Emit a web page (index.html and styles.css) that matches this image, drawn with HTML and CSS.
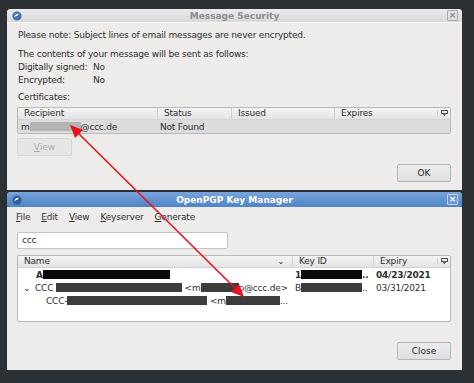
FILE: index.html
```html
<!DOCTYPE html>
<html lang="en">
<head>
<meta charset="utf-8">
<title>Message Security / OpenPGP Key Manager</title>
<link rel="stylesheet" href="styles.css">
</head>
<body>
<div class="desk">

<!-- Message Security dialog (inactive) -->
<div class="win win-sec">
  <div class="titlebar inactive">
    <svg class="appicon" viewBox="0 0 10 10" width="10" height="10">
      <circle cx="5" cy="5" r="4.6" fill="#3f6fb4"/>
      <path d="M2.2 6.3 C2.6 3.6 4.6 2.3 7.4 2.8 C6 3.3 5.4 4.1 5.6 5 C4.4 4.6 3.2 5.2 2.2 6.3 Z" fill="#fff"/>
    </svg>
    <span class="title">Message Security</span>
    <span class="closebtn">×</span>
  </div>
  <div class="content">
    <p class="line first">Please note: Subject lines of email messages are never encrypted.</p>
    <p class="line second">The contents of your message will be sent as follows:</p>
    <div class="status">
      <span>Digitally signed:</span><span>No</span>
      <span>Encrypted:</span><span>No</span>
    </div>
    <p class="line certs">Certificates:</p>
    <div class="table">
      <div class="thead cert-cols">
        <span>Recipient</span><span>Status</span><span>Issued</span><span>Expires</span>
        <span class="picker"><svg viewBox="0 0 7 7" width="7" height="7"><rect x="0.5" y="0.5" width="6" height="3" fill="none" stroke="#555"/><path d="M2 4 L5 4 L3.5 6.5 Z" fill="#555"/></svg></span>
      </div>
      <div class="trow cert-cols selected">
        <span>m<i class="blur"></i>@ccc.de</span><span>Not Found</span><span></span><span></span><span></span>
      </div>
    </div>
    <button class="btn btn-view" disabled><u>V</u>iew</button>
    <div class="actions"><button class="btn">OK</button></div>
  </div>
</div>

<!-- OpenPGP Key Manager (active) -->
<div class="win win-keys">
  <div class="titlebar active">
    <svg class="appicon" viewBox="0 0 10 10" width="10" height="10">
      <circle cx="5" cy="5" r="4.6" fill="#2f5f9e"/>
      <path d="M2.2 6.3 C2.6 3.6 4.6 2.3 7.4 2.8 C6 3.3 5.4 4.1 5.6 5 C4.4 4.6 3.2 5.2 2.2 6.3 Z" fill="#fff"/>
    </svg>
    <span class="title">OpenPGP Key Manager</span>
    <span class="closebtn">×</span>
  </div>
  <div class="menubar">
    <span><u>F</u>ile</span>
    <span><u>E</u>dit</span>
    <span><u>V</u>iew</span>
    <span><u>K</u>eyserver</span>
    <span><u>G</u>enerate</span>
  </div>
  <div class="content">
    <div class="search">ccc</div>
    <div class="tree">
      <div class="thead key-cols">
        <span class="namehead">Name <b class="sort">⌄</b></span><span>Key ID</span><span>Expiry</span>
        <span class="picker"><svg viewBox="0 0 7 7" width="7" height="7"><rect x="0.5" y="0.5" width="6" height="3" fill="none" stroke="#555"/><path d="M2 4 L5 4 L3.5 6.5 Z" fill="#555"/></svg></span>
      </div>
      <div class="trow key-cols bold">
        <span class="lvl1">A<i class="box black w-a"></i></span>
        <span>1<i class="box black w-id"></i>..</span>
        <span>04/23/2021</span><span></span>
      </div>
      <div class="trow key-cols">
        <span class="lvl0"><b class="twisty">⌄</b>CCC <i class="box w-c1"></i> &lt;m<i class="box w-c2"></i>p@ccc.de&gt;</span>
        <span>B<i class="box w-id"></i>..</span>
        <span>03/31/2021</span><span></span>
      </div>
      <div class="trow key-cols">
        <span class="lvl2">CCC-<i class="box w-d1"></i> &lt;m<i class="box w-d2"></i>...</span>
        <span></span><span></span><span></span>
      </div>
    </div>
    <div class="actions keys-actions"><button class="btn">Close</button></div>
  </div>
</div>

<!-- red annotation arrow over both windows -->
<svg class="annot" viewBox="0 0 474 383" width="474" height="383">
  <line x1="76" y1="131" x2="238" y2="291" stroke="#e8131a" stroke-width="1.6"/>
  <path d="M70 125 L83 130 L75 138 Z" fill="#e8131a"/>
  <path d="M244 297 L231 292 L239 284 Z" fill="#e8131a"/>
</svg>

</div>
</body>
</html>
```

FILE: styles.css
```css
html, body {
	margin: 0;
}
body {
	background: #2a3033;
	color: #2e2e2e;
	font-family: "DejaVu Sans", sans-serif;
	font-size: 9px;
	letter-spacing: -0.2px;
}
p {
	margin: 0;
}
.desk {
	position: relative;
	width: 474px;
	height: 383px;
	overflow: hidden;
}

/* windows */
.win {
	position: absolute;
	left: 7px;
	width: 455px;
	background: #edeceb;
	border-radius: 4px 4px 0 0;
	display: flex;
	flex-direction: column;
}
.win-sec {
	top: 9px;
	height: 181px;
}
.win-keys {
	top: 192px;
	height: 178px;
}
.titlebar {
	display: grid;
	grid-template-columns: 1fr auto 1fr;
	align-items: center;
	font-weight: bold;
	letter-spacing: 0;
	border-radius: 4px 4px 0 0;
}
.titlebar.inactive {
	height: 13px;
	background: linear-gradient(#ebebeb, #d9d9d9);
	color: #8e8e8e;
	border-bottom: 1px solid #f6f6f6;
}
.titlebar.active {
	height: 15px;
	background: linear-gradient(#78a4da, #4f84c8);
	color: #fff;
}
.appicon {
	margin-left: 5px;
}
.closebtn {
	justify-self: end;
	margin-right: 4px;
	width: 9px;
	height: 9px;
	line-height: 8px;
	text-align: center;
	font-size: 9px;
	border: 1px solid #a9a9a9;
	border-radius: 1px;
	color: #888;
}
.active .closebtn {
	border-color: #c3d6ef;
	color: #fff;
	background: #6c98d1;
}

.content {
	padding: 0 11px 0 10px;
	display: flex;
	flex-direction: column;
}
.line {
	line-height: 13px;
	padding-left: 1px;
}
.first {
	margin-top: 6px;
}
.second {
	margin-top: 6px;
}
.status {
	display: grid;
	grid-template-columns: 75px auto;
	line-height: 13px;
	padding-left: 1px;
}
.certs {
	margin-top: 4px;
}

/* list tables */
.table, .tree {
	border: 1px solid #b9b9b9;
	border-radius: 2px;
	margin-top: 3px;
}
.table {
	background: #edeceb;
}
.tree {
	background: #fff;
	height: 65px;
	margin-top: 6px;
}
.thead, .trow {
	display: grid;
	align-items: center;
	white-space: nowrap;
}
.thead {
	height: 11px;
	background: linear-gradient(#f4f4f4, #e4e4e4);
	border-bottom: 1px solid #d4d4d4;
}
.thead > span {
	padding-left: 6px;
	border-left: 1px solid #d0d0d0;
	line-height: 11px;
}
.thead > span:first-child {
	border-left: none;
}
.trow {
	height: 13px;
}
.trow > span {
	padding-left: 3px;
	overflow: hidden;
}
.cert-cols {
	grid-template-columns: 139px 74px 103px 103px 1fr;
}
.key-cols {
	grid-template-columns: 274px 81px 64px 1fr;
}
.picker {
	display: flex;
	align-items: center;
	justify-content: center;
}
.thead > .picker {
	padding-left: 0;
}
.selected {
	background: #dcdcdc;
}
.blur {
	display: inline-block;
	width: 51px;
	height: 9px;
	background: #b4b4b4;
	vertical-align: -1px;
}
.namehead {
	display: flex;
	justify-content: space-between;
	padding-right: 8px;
}
.sort {
	font-weight: normal;
	font-size: 8px;
}

/* key manager */
.menubar {
	display: flex;
	gap: 11px;
	height: 19px;
	align-items: center;
	padding-left: 9px;
}
.search {
	margin-top: 6px;
	height: 15px;
	line-height: 15px;
	width: 205px;
	padding-left: 4px;
	background: #fff;
	border: 1px solid #c3c3c3;
	border-radius: 2px;
}
.bold {
	font-weight: bold;
}
.lvl0 {
	padding-left: 5px !important;
}
.lvl1 {
	padding-left: 18px !important;
}
.lvl2 {
	padding-left: 28px !important;
}
.twisty {
	font-weight: normal;
	display: inline-block;
	width: 12px;
}
.box {
	display: inline-block;
	height: 9px;
	background: #3c3c3c;
	vertical-align: -1px;
}
.black {
	background: #0a0a0a;
}
.w-a { width: 127px; }
.w-id { width: 61px; }
.w-c1 { width: 126px; }
.w-c2 { width: 38px; }
.w-d1 { width: 140px; }
.w-d2 { width: 54px; }

/* buttons */
.btn {
	font-family: "DejaVu Sans", sans-serif;
	font-size: 9px;
	color: #2e2e2e;
	background: linear-gradient(#ececec, #e0e0e0);
	border: 1px solid #b5b5b5;
	border-radius: 2px;
	width: 54px;
	height: 18px;
	padding: 0;
}
.btn-view {
	margin-top: 4px;
	width: 55px;
	color: #a9a9a9;
	border-color: #d6d6d6;
	background: #e6e6e6;
}
.actions {
	display: flex;
	justify-content: flex-end;
	margin-top: 8px;
}
.keys-actions {
	margin-top: 20px;
}

.annot {
	position: absolute;
	left: 0;
	top: 0;
	pointer-events: none;
}
```
